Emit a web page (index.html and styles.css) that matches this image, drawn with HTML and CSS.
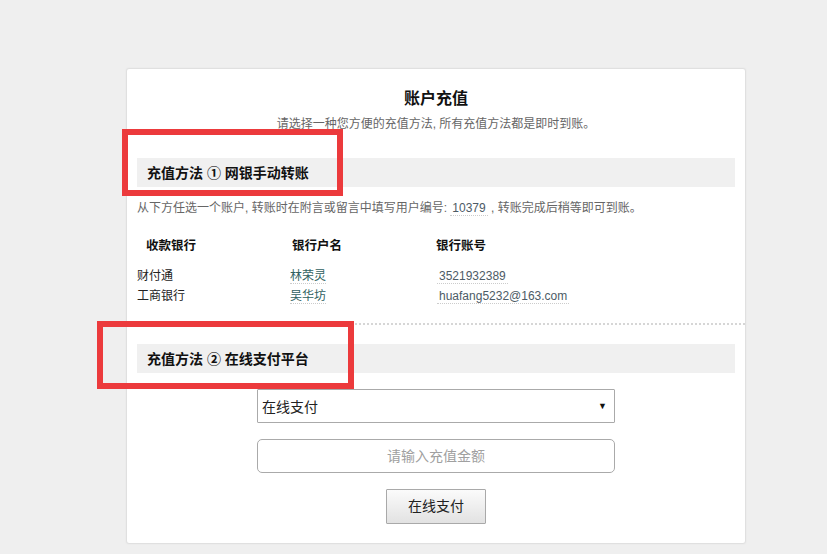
FILE: index.html
```html
<!DOCTYPE html>
<html lang="zh-CN">
<head>
<meta charset="utf-8">
<title>账户充值</title>
<link rel="stylesheet" href="styles.css">
</head>
<body>
<div class="card">
  <div class="intro">
    <h1 class="title">账户充值</h1>
    <p class="subtitle">请选择一种您方便的充值方法, 所有充值方法都是即时到账。</p>
  </div>

  <section class="method">
    <h2 class="method-head">充值方法 ① 网银手动转账</h2>
    <p class="desc">从下方任选一个账户, 转账时在附言或留言中填写用户编号: <span class="code">10379</span> , 转账完成后稍等即可到账。</p>
    <div class="banks">
      <div class="th th1">收款银行</div>
      <div class="th th2">银行户名</div>
      <div class="th th3">银行账号</div>
      <div class="td">财付通</div>
      <div class="td"><span class="name">林荣灵</span></div>
      <div class="td td3"><span class="acct">3521932389</span></div>
      <div class="td">工商银行</div>
      <div class="td"><span class="name">吴华坊</span></div>
      <div class="td td3"><span class="acct">huafang5232@163.com</span></div>
    </div>
  </section>

  <div class="divider"></div>

  <section class="method method2">
    <h2 class="method-head">充值方法 ② 在线支付平台</h2>
    <div class="pay-form">
      <div class="select">
        <span>在线支付</span>
        <span class="arrow">▼</span>
      </div>
      <div class="amount">请输入充值金额</div>
      <div class="pay-btn">在线支付</div>
    </div>
  </section>
</div>

<div class="mark mark1"></div>
<div class="mark mark2"></div>
</body>
</html>
```

FILE: styles.css
```css
html, body {
  margin: 0;
  padding: 0;
}
body {
  background: #efefef;
  font-family: "Liberation Sans", "Noto Sans CJK SC", sans-serif;
  color: #222;
  width: 827px;
  height: 554px;
  overflow: hidden;
  position: relative;
}
.card {
  margin: 68px 0 0 126px;
  width: 618px;
  background: #fff;
  border: 1px solid #e0e0e0;
  border-radius: 3px;
  box-shadow: 0 0 2px rgba(0, 0, 0, 0.06);
  padding: 20px 0 19px;
}
.intro {
  text-align: center;
}
.title {
  margin: 0;
  font-size: 16px;
  line-height: 20px;
  font-weight: bold;
  color: #111;
}
.subtitle {
  margin: 7px 0 0;
  font-size: 12px;
  line-height: 16px;
  color: #666;
}
.method {
  padding: 0 10px;
  margin-top: 26px;
}
.method-head {
  margin: 0;
  height: 29px;
  line-height: 30px;
  background: #f0f0f0;
  padding-left: 10px;
  font-size: 14px;
  font-weight: bold;
  color: #111;
}
.desc {
  margin: 12px 0 0;
  font-size: 12px;
  line-height: 18px;
  color: #666;
}
.code {
  color: #4d5b66;
  border-bottom: 1px dotted #ccc;
  padding: 0 2px;
}
.banks {
  margin-top: 19px;
  display: grid;
  grid-template-columns: 153px 146px 1fr;
  grid-template-rows: 20px 30px 20px;
  align-items: end;
  font-size: 12px;
  line-height: 20px;
}
.th {
  font-weight: bold;
  font-size: 12.5px;
  color: #111;
  align-self: start;
}
.th1 { padding-left: 9px; }
.th2 { padding-left: 2px; }
.td { color: #222; }
.name {
  color: #2f5f5f;
  border-bottom: 1px dotted #ccc;
}
.td3 { padding-left: 1px; }
.acct {
  color: #4d5b66;
  border-bottom: 1px dotted #ccc;
  padding: 0 2px;
}
.divider {
  margin-top: 17px;
  border-top: 2px dotted #d6d6d6;
}
.method2 {
  margin-top: 19px;
}
.pay-form {
  display: flex;
  flex-direction: column;
  align-items: center;
}
.select {
  margin-top: 16px;
  height: 32px;
  border: 1px solid #aaa;
  border-radius: 1px;
  display: flex;
  align-items: center;
  justify-content: space-between;
  padding: 0 7px 0 4px;
  width: 345px;
  font-size: 14px;
  color: #222;
}
.arrow {
  font-size: 9px;
  color: #111;
}
.amount {
  margin-top: 16px;
  width: 356px;
  height: 32px;
  border: 1px solid #aaa;
  border-radius: 5px;
  text-align: center;
  line-height: 32px;
  font-size: 14px;
  color: #a0a0a0;
}
.pay-btn {
  margin-top: 16px;
  width: 98px;
  height: 33px;
  border: 1px solid #a9a9a9;
  border-radius: 1px;
  background: linear-gradient(#fbfbfb, #e2e2e2);
  text-align: center;
  line-height: 33px;
  font-size: 14px;
  color: #222;
}
.mark {
  position: absolute;
  border: 6px solid #ec3a3c;
  box-sizing: border-box;
}
.mark1 {
  left: 122px;
  top: 129px;
  width: 221px;
  height: 67px;
}
.mark2 {
  left: 97px;
  top: 321px;
  width: 257px;
  height: 68px;
}
```
